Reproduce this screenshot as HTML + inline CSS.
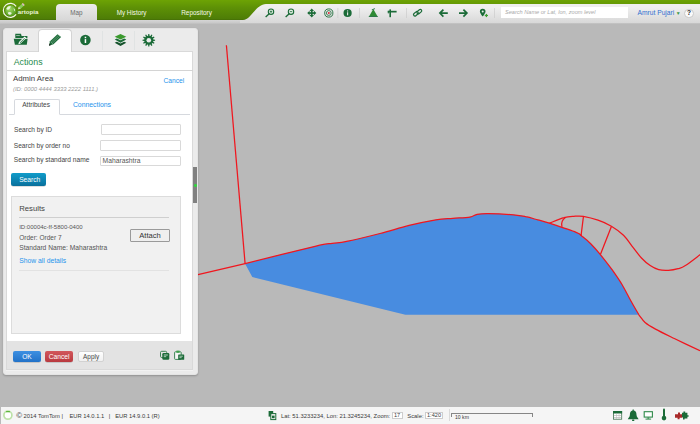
<!DOCTYPE html>
<html>
<head>
<meta charset="utf-8">
<title>Cartopia</title>
<style>
*{box-sizing:border-box;margin:0;padding:0}
html,body{width:700px;height:424px;overflow:hidden}
body{position:relative;background:#b9b9b9;font-family:"Liberation Sans",sans-serif;font-size:7px;color:#333}
.abs{position:absolute}
.t{position:absolute;white-space:nowrap;line-height:1}
#hdr{left:0;top:0;width:700px;height:20px;background:linear-gradient(#6da304,#5d9006 40%,#4e7d07 94%,#436c06)}
#hdrband{left:0;top:20px;width:700px;height:3.500px;background:linear-gradient(#d6d6d6,#c9c9c9 70%,#bcbcbc)}
#maptab{left:56px;top:4px;width:41px;height:17px;border-radius:4px 4px 0 0;background:linear-gradient(#ececec,#d6d6d6)}
.nav{color:#f4f8ea;font-size:6.300px;top:9.600px}
#panel{left:3px;top:28px;width:195.200px;height:346.500px;background:#ebebeb;border:1px solid #e4e4e4;border-radius:3px;box-shadow:0 1px 2px rgba(0,0,0,.22)}
#pinner{left:6px;top:50.700px;width:187.300px;height:319.800px;background:#e3e3e3;border:1px solid #d9d9d9;box-shadow:0 .7px 0 #f6f6f6}
#ptab{left:37.800px;top:28.800px;width:33.800px;height:23.200px;background:#fff;border-radius:4px 4px 0 0;border:1px solid #d4d4d4;border-bottom:none}
#pcontent{left:7px;top:51.500px;width:185.300px;height:289.500px;background:#fff}
.inp{position:absolute;background:#fff;border:1px solid #d9d9d9;height:10px;border-radius:1px}
.blue{color:#2794ec}
.btn{position:absolute;border-radius:2px;text-align:center;font-size:7px;line-height:11px;color:#fff}
#bot{left:1px;top:406.700px;width:699px;height:18px;background:#f5f5f5;box-shadow:inset 0 -1.100px 0 #d6d6d6}
.bt{font-size:5.800px;color:#3a3a3a;top:413.500px}
.box{position:absolute;background:#fff;border:1px solid #cdcdcd}
</style>
</head>
<body>

<!-- MAP -->
<svg class="abs" style="left:0;top:0" width="700" height="424" viewBox="0 0 700 424">
  <path d="M245.1,263.7 C256.8,260.8 300.6,249.7 315.1,246.3 C329.6,242.9 327.1,244.2 332.3,243.4 C337.6,242.6 338.7,243.1 346.6,241.4 C354.6,239.8 369.6,236.2 380.0,233.5 C390.4,230.8 399.8,227.7 409.1,225.4 C418.4,223.1 428.6,221.0 435.9,219.8 C443.2,218.6 447.2,218.8 452.9,218.3 C458.6,217.9 465.9,217.8 469.9,217.1 C473.9,216.4 474.1,215.0 477.1,214.4 C480.1,213.8 482.0,213.5 488.1,213.6 C494.2,213.7 507.3,214.3 513.6,214.8 C519.9,215.3 521.7,215.8 525.7,216.7 C529.7,217.5 533.8,218.8 537.8,219.9 C541.8,221.0 543.0,221.1 549.4,223.2 C555.8,225.3 570.6,230.1 576.1,232.3 C581.6,234.5 579.8,234.5 582.2,236.4 C584.6,238.3 587.7,240.7 590.7,243.7 C593.7,246.7 596.8,250.2 600.4,254.6 C604.0,259.1 609.0,265.3 612.6,270.4 C616.2,275.5 619.3,279.9 622.3,285.0 C625.3,290.1 628.0,295.8 630.8,300.8 C633.6,305.8 637.5,312.5 638.9,314.8 L405.4,314.8 L252.3,277.1 Z" fill="#488ce0"/>
  <g fill="none" stroke="#f0161e" stroke-width="1.250" stroke-linejoin="round">
    <path d="M226.4,45.2 L245.1,263.7"/>
    <path d="M198,274.7 L245.1,263.7 C256.8,260.8 300.6,249.7 315.1,246.3 C329.6,242.9 327.1,244.2 332.3,243.4 C337.6,242.6 338.7,243.1 346.6,241.4 C354.6,239.8 369.6,236.2 380.0,233.5 C390.4,230.8 399.8,227.7 409.1,225.4 C418.4,223.1 428.6,221.0 435.9,219.8 C443.2,218.6 447.2,218.8 452.9,218.3 C458.6,217.9 465.9,217.8 469.9,217.1 C473.9,216.4 474.1,215.0 477.1,214.4 C480.1,213.8 482.0,213.5 488.1,213.6 C494.2,213.7 507.3,214.3 513.6,214.8 C519.9,215.3 521.7,215.8 525.7,216.7 C529.7,217.5 533.8,218.8 537.8,219.9 C541.8,221.0 543.0,221.1 549.4,223.2 C555.8,225.3 570.6,230.1 576.1,232.3 C581.6,234.5 579.8,234.5 582.2,236.4 C584.6,238.3 587.7,240.7 590.7,243.7 C593.7,246.7 596.8,250.2 600.4,254.6 C604.0,259.1 609.0,265.3 612.6,270.4 C616.2,275.5 619.3,279.9 622.3,285.0 C625.3,290.1 628.0,295.8 630.8,300.8 C633.6,305.8 637.5,312.5 638.9,314.8 C639.1,315.1 639.4,315.5 640.4,316.8 C641.4,318.1 642.6,320.4 645.1,322.5 C647.6,324.6 650.6,326.4 655.5,329.1 C660.4,331.8 666.9,334.9 674.3,338.5 C681.7,342.1 695.7,348.8 700.0,350.8"/>
    <path d="M549.4,223.2 C551.8,222.3 560.0,218.8 564.0,217.7 C568.0,216.5 570.5,216.5 573.7,216.3 C576.9,216.1 579.4,215.7 583.4,216.3 C587.4,217.0 593.3,218.5 598.0,220.2 C602.7,221.8 607.1,223.7 611.4,226.2 C615.6,228.7 620.1,231.9 623.5,235.2 C626.9,238.5 629.0,242.2 632.0,246.1 C635.0,249.9 638.7,255.1 641.7,258.3 C644.7,261.6 647.4,263.7 650.2,265.6 C653.0,267.5 655.7,268.9 658.7,269.7 C661.7,270.5 665.2,270.6 668.4,270.4 C671.6,270.2 675.3,269.5 678.1,268.7 C680.9,267.9 681.6,268.1 685.4,265.6 C689.2,263.2 698.4,255.9 701.0,254.0"/>
    <path d="M565.4,217.600 Q560.5,221 562,226.800"/>
    <path d="M583.4,216.800 L581,236"/>
    <path d="M611.4,226.500 L600.4,254.600"/>
  </g>
</svg>

<!-- HEADER -->
<div id="hdr" class="abs"></div>
<div id="hdrband" class="abs"></div>
<svg class="abs" style="left:0;top:0" width="700" height="23" viewBox="0 0 700 23">
  <defs>
    <linearGradient id="tg" x1="0" y1="0" x2="0" y2="1"><stop offset="0.17" stop-color="#efefef"/><stop offset="1" stop-color="#d8d8d8"/></linearGradient>
  </defs>
  <path d="M240,23 L240,20 L243,20 C251,20 256,4 266,4 L700,4 L700,23 Z" fill="url(#tg)"/>
</svg>
<div id="maptab" class="abs"></div>

<!-- logo -->
<svg class="abs" style="left:0;top:0" width="44" height="20" viewBox="0 0 44 20">
  <defs>
    <radialGradient id="gl" cx=".4" cy=".35" r=".7"><stop offset="0" stop-color="#a6dc6a"/><stop offset="1" stop-color="#4f9a1c"/></radialGradient>
  </defs>
  <circle cx="10.600" cy="10.700" r="5.400" fill="url(#gl)"/>
  <path d="M6.400,8.400 Q7.600,5.800 10.800,6 Q10.600,8.400 8.800,9.600 Q6.800,10.200 6.400,8.400Z M7.800,12.600 Q10,11.400 11.800,13 Q11.200,15.200 9,14.800 Q7.800,14 7.800,12.600Z M13.600,7.800 Q15.400,9.400 15.200,11.800 Q13.600,11 13.600,7.800Z" fill="#f2f9e8" opacity=".92"/>
  <path d="M16.100,6.400 A7,7 0 1 0 16.100,14.400" fill="none" stroke="#f4f8ec" stroke-width="1.200"/>
  <path d="M18,9.200 L18.800,6.800 L22.800,3.100 L24.700,5 L20.600,8.700Z" fill="#86cc58"/>
  <path d="M22.800,3.100 L24.700,5 L23.700,5.900 L21.800,4Z" fill="#e6b4c6"/>
  <path d="M18,9.200 L18.800,6.800 L20.600,8.700Z" fill="#e4dcc4"/>
</svg>
<div class="t" style="left:17.800px;top:9.300px;font-size:6.200px;font-weight:bold;color:#eaf3dc">artopia</div>

<div class="t" style="left:70.200px;top:9.600px;font-size:6.300px;color:#6a6a6a">Map</div>
<div class="t nav" style="left:116.700px">My History</div>
<div class="t nav" style="left:181.200px;font-size:6.450px">Repository</div>

<!-- toolbar icons -->
<svg class="abs" style="left:260px;top:4px" width="240" height="18" viewBox="260 4 240 18" fill="#1b6b38" stroke="none">
  <!-- zoom in -->
  <g>
    <circle cx="271" cy="11.7" r="2.7" fill="#e4efe6" stroke="#1b6b38" stroke-width="1.1"/>
    <path d="M269,13 L265.200,16.4 L266.100,17.400 L269.900,14Z"/>
    <rect x="269.800" y="11.3" width="2.4" height=".8"/><rect x="270.600" y="10.5" width=".8" height="2.4"/>
  </g>
  <!-- zoom out -->
  <g>
    <circle cx="291" cy="11.7" r="2.7" fill="#e4efe6" stroke="#1b6b38" stroke-width="1.1"/>
    <path d="M289,13 L285.200,16.4 L286.100,17.400 L289.900,14Z"/>
    <rect x="289.800" y="11.3" width="2.4" height=".8"/>
  </g>
  <!-- pan -->
  <g>
    <rect x="310.900" y="10" width="1.700" height="6"/><rect x="308.700" y="12.2" width="6" height="1.700"/>
    <path d="M311.750,8.600 L314,11 L309.500,11Z M311.750,17.500 L314,15.100 L309.500,15.100Z M307.200,13.050 L309.600,10.800 L309.600,15.300Z M316.300,13.050 L313.900,10.800 L313.900,15.300Z"/>
  </g>
  <!-- target -->
  <g fill="none" stroke="#1b6b38">
    <circle cx="328.800" cy="13" r="4.100" stroke-width=".9"/>
    <circle cx="328.800" cy="13" r="2.400" stroke-width=".8"/>
    <circle cx="328.800" cy="13" r="1" fill="#d23" stroke="none"/>
  </g>
  <rect x="337.600" y="8" width=".6" height="10" fill="#c8c8c8"/>
  <!-- info -->
  <g>
    <circle cx="347.600" cy="13" r="4.100"/>
    <rect x="347.050" y="12.300" width="1.100" height="3" fill="#e8e8e8"/><rect x="347.050" y="10.400" width="1.100" height="1.100" fill="#e8e8e8"/>
  </g>
  <rect x="359.200" y="8" width=".6" height="10" fill="#c8c8c8"/>
  <!-- cone -->
  <g>
    <path d="M373.300,9 L377.300,16 L369.300,16Z" fill="#2f8a35"/>
    <rect x="368.800" y="16" width="9" height=".9" />
    <path d="M371.800,9.800 L375,8.600" stroke="#1b6b38" stroke-width=".8"/>
  </g>
  <!-- signpost -->
  <g>
    <rect x="389.400" y="9.400" width="1.600" height="7.800"/>
    <rect x="387.800" y="10.800" width="8.800" height="1.700"/>
    <rect x="387.800" y="10.800" width="1" height="2.600"/>
  </g>
  <rect x="406.200" y="8" width=".6" height="10" fill="#c8c8c8"/>
  <!-- link -->
  <g fill="none" stroke="#1b6b38" stroke-width="1.200">
    <rect x="413.200" y="12.300" width="5.400" height="2.800" rx="1.400" transform="rotate(-40 416 13.700)"/>
    <rect x="416.600" y="10.200" width="5.400" height="2.800" rx="1.400" transform="rotate(-40 419.300 11.600)"/>
  </g>
  <!-- arrows -->
  <g fill="none" stroke="#1b6b38" stroke-width="1.700">
    <path d="M447.800,13.100 L440,13.100 M443.400,9.600 L439.900,13.100 L443.400,16.600"/>
    <path d="M459,13.100 L466.800,13.100 M463.400,9.600 L466.900,13.100 L463.400,16.600"/>
  </g>
  <!-- pin -->
  <g>
    <path d="M482.700,8.800 a2.800,2.800 0 0 1 2.800,2.800 c0,1.800 -2.800,5 -2.800,5 c0,0 -2.800,-3.200 -2.800,-5 a2.800,2.800 0 0 1 2.800,-2.800Z"/>
    <circle cx="482.700" cy="11.500" r="1" fill="#eee"/>
    <rect x="484.800" y="14.900" width="3.200" height="1.200" fill="#3ca033"/><rect x="485.800" y="13.900" width="1.200" height="3.200" fill="#3ca033"/>
  </g>
  <rect x="494.200" y="8" width=".6" height="10" fill="#c8c8c8"/>
</svg>

<div class="abs" style="left:501px;top:7.4px;width:126.600px;height:10.200px;background:#fff"></div>
<div class="t" style="left:505px;top:10.3px;font-size:5.6px;font-style:italic;color:#aaa">Search Name or Lat, lon, zoom level</div>
<div class="t" style="left:637.5px;top:10px;font-size:6.700px;color:#2f6fd0">Amrut Pujari</div>
<div class="t" style="left:675.800px;top:11px;font-size:5px;color:#3c9a4a">&#9660;</div>
<div class="abs" style="left:684px;top:8.5px;width:9.5px;height:9.5px;border-radius:5px;background:#fafafa;border:1px solid #c8c8c8"></div>
<div class="t" style="left:687px;top:10.2px;font-size:6.5px;font-weight:bold;color:#222">?</div>

<!-- PANEL -->
<div id="panel" class="abs"></div>
<div id="pinner" class="abs"></div>
<div id="pcontent" class="abs"></div>
<div id="ptab" class="abs"></div>
<div class="abs" style="left:101.700px;top:31px;width:1px;height:18.500px;background:#e0e3e3"></div>
<div class="abs" style="left:134.200px;top:31px;width:1px;height:18.500px;background:#e0e3e3"></div>

<svg class="abs" style="left:8px;top:30px" width="160" height="22" viewBox="8 30 160 22" fill="#1b6b38">
  <!-- folder edit -->
  <g>
    <path d="M15.300,33.800 L21,33.800 L21.600,36 L27.400,36 L27.400,38 L15.300,38Z"/>
    <rect x="16.200" y="35.200" width="3.600" height=".6" fill="#e6e6e6"/>
    <path d="M13.800,38.700 L27.600,38.700 L26.800,44.800 L14.900,44.800Z"/>
    <path d="M18.300,44.300 L19,42 L24.600,36.400 L26.300,38 L20.600,43.600Z" fill="#fff"/>
    <path d="M19.700,42.800 L24.500,38 L24.900,38.400 L20.100,43.200Z" fill="#1b6b38"/>
  </g>
  <!-- pencil -->
  <g>
    <path d="M57.500,34.200 L61.100,37 L53.400,44.300 L49,45.800 L50,41.300Z"/>
    <path d="M49,45.800 L49.500,43.600 L51,45.100Z" fill="#222"/>
    <g stroke="#cfe3d4" stroke-width=".35" fill="none">
      <path d="M51.200,42.200 L58.600,35.200 M52.300,43.200 L59.800,36.100"/>
      <path d="M50.400,41.600 L53.100,44"/>
    </g>
  </g>
  <!-- info -->
  <g>
    <circle cx="85.400" cy="40" r="5.300"/>
    <rect x="84.700" y="39.100" width="1.500" height="3.900" fill="#fff"/><rect x="84.700" y="36.700" width="1.500" height="1.500" fill="#fff"/>
  </g>
  <!-- layers -->
  <g>
    <path d="M120.500,33.900 L126.300,36.700 L120.500,39.500 L114.700,36.700Z" fill="#3b9a2e"/>
    <path d="M114.700,39.500 L116.900,38.400 L120.500,40.200 L124.100,38.400 L126.300,39.500 L120.500,42.700Z" fill="#1b6b38"/>
    <path d="M114.700,42.800 L116.900,41.700 L120.500,43.500 L124.100,41.700 L126.300,42.800 L120.500,46Z" fill="#14522b"/>
  </g>
  <!-- gear -->
  <g>
    <path d="M148.08,35.66 L148.24,33.92 L149.36,33.92 L149.52,35.66 L150.45,35.91 L151.45,34.49 L152.42,35.05 L151.69,36.63 L152.37,37.31 L153.95,36.58 L154.51,37.55 L153.09,38.55 L153.34,39.48 L155.08,39.64 L155.08,40.76 L153.34,40.92 L153.09,41.85 L154.51,42.85 L153.95,43.82 L152.37,43.09 L151.69,43.77 L152.42,45.35 L151.45,45.91 L150.45,44.49 L149.52,44.74 L149.36,46.48 L148.24,46.48 L148.08,44.74 L147.15,44.49 L146.15,45.91 L145.18,45.35 L145.91,43.77 L145.23,43.09 L143.65,43.82 L143.09,42.85 L144.51,41.85 L144.26,40.92 L142.52,40.76 L142.52,39.64 L144.26,39.48 L144.51,38.55 L143.09,37.55 L143.65,36.58 L145.23,37.31 L145.91,36.63 L145.18,35.05 L146.15,34.49 L147.15,35.91Z" />
    <circle cx="148.800" cy="40.200" r="2.300" fill="#ebebeb"/>
  </g>
</svg>

<div class="t" style="left:13.700px;top:57.600px;font-size:8.800px;color:#1f8a4c">Actions</div>
<div class="abs" style="left:7px;top:69.800px;width:185.500px;height:1px;background:#d4d4d4"></div>
<div class="t" style="left:13px;top:74.700px;font-size:7.800px;color:#3c3c3c">Admin Area</div>
<div class="t" style="left:13px;top:87.200px;font-size:5.870px;font-style:italic;color:#9a9a9a">(ID: 0000 4444 3333 2222 1111.)</div>
<div class="t blue" style="left:163.500px;top:77.800px;font-size:6.700px">Cancel</div>

<!-- inner tabs -->
<div class="abs" style="left:9px;top:114px;width:180.500px;height:1px;background:#d6d9de"></div>
<div class="abs" style="left:13.500px;top:99px;width:46.500px;height:16px;background:#fff;border:1px solid #d6d9de;border-bottom:1px solid #fff;border-radius:2px 2px 0 0"></div>
<div class="t" style="left:22.200px;top:102px;font-size:6.600px;color:#444">Attributes</div>
<div class="t blue" style="left:72.900px;top:101.900px;font-size:6.870px">Connections</div>

<!-- form -->
<div class="t" style="left:14px;top:126.700px;font-size:6.600px;color:#444">Search by ID</div>
<div class="inp" style="left:101px;top:124.200px;width:80px;height:10.600px"></div>
<div class="t" style="left:13.800px;top:142.500px;font-size:6.600px;color:#444">Search by order no</div>
<div class="inp" style="left:100px;top:140px;width:81px;height:10.500px"></div>
<div class="t" style="left:13.800px;top:157.300px;font-size:6.600px;color:#444">Search by standard name</div>
<div class="inp" style="left:100px;top:156px;width:81px"></div>
<div class="t" style="left:102.600px;top:158.400px;font-size:6.740px;color:#555">Maharashtra</div>

<div class="btn" style="left:11px;top:173px;width:35.300px;height:13px;line-height:14.300px;text-indent:2.200px;font-size:6.700px;background:linear-gradient(#109cca,#0b79a6 80%,#0a6f9a);box-shadow:0 .5px .5px rgba(0,0,0,.25)">Search</div>

<!-- scrollbar -->
<div class="abs" style="left:193.100px;top:166.500px;width:4.300px;height:36.400px;background:#808080"></div>
<div class="abs" style="left:194.400px;top:184.300px;width:2.400px;height:2.400px;border-radius:1.200px;background:#34d440"></div>

<!-- results -->
<div class="abs" style="left:11px;top:196px;width:170px;height:138px;background:#f1f1f1;border:1px solid #dcdcdc"></div>
<div class="t" style="left:19.200px;top:205.200px;font-size:7.740px;color:#444">Results</div>
<div class="abs" style="left:19px;top:217px;width:150px;height:1px;background:#cfcfcf"></div>
<div class="t" style="left:19.200px;top:224.300px;font-size:6.020px;color:#555">ID:00004c-ff-5800-0400</div>
<div class="t" style="left:19.200px;top:234.800px;font-size:6.520px;color:#555">Order: Order 7</div>
<div class="t" style="left:19.200px;top:244.600px;font-size:6.700px;color:#555">Standard Name: Maharashtra</div>
<div class="t blue" style="left:19.200px;top:257.800px;font-size:6.770px">Show all details</div>
<div class="abs" style="left:19px;top:270px;width:150px;height:1px;background:#e2e2e2"></div>
<div class="btn" style="left:130px;top:229px;width:40px;height:13px;line-height:11px;font-size:7.6px;color:#333;background:#efefef;border:1px solid #9a9a9a;border-radius:1px">Attach</div>

<!-- footer buttons -->
<div class="btn" style="left:13.200px;top:350.600px;width:27.500px;height:11.500px;line-height:12.400px;font-size:6.600px;background:linear-gradient(#3d90e2,#2272c8);box-shadow:0 .5px .5px rgba(0,0,0,.25)">OK</div>
<div class="btn" style="left:45px;top:350.600px;width:28.300px;height:11.500px;line-height:12.200px;font-size:6.700px;background:linear-gradient(#d2565b,#b93a3f);box-shadow:0 .5px .5px rgba(0,0,0,.25)">Cancel</div>
<div class="btn" style="left:77.500px;top:350.600px;width:26.200px;height:11.500px;line-height:10.600px;font-size:6.400px;text-indent:1px;background:linear-gradient(#fff,#f0f0f0);border:1px solid #d2d2d2;color:#444">Apply</div>
<svg class="abs" style="left:158px;top:349px" width="30" height="14" viewBox="158 349 30 14" fill="#1b6b38">
  <g>
    <rect x="160.500" y="351.300" width="6.200" height="6.200" rx="1.200" fill="#e3e3e3" stroke="#2a7a45" stroke-width=".9"/>
    <rect x="162.300" y="353" width="7" height="6.800" rx="1.200" fill="#1b6b38"/>
    <rect x="163.800" y="354.600" width="4" height=".8" fill="#dfeee3"/>
    <rect x="163.800" y="356.400" width="2.400" height=".7" fill="#dfeee3"/>
  </g>
  <g>
    <rect x="174.600" y="351.800" width="6.600" height="7.600" rx=".8" fill="#f4f4f4" stroke="#2a7a45" stroke-width=".9"/>
    <rect x="176.400" y="350.600" width="3.200" height="2.200" fill="#3ca04a"/>
    <rect x="178.200" y="354.400" width="6" height="5.400" rx=".6" fill="#1b6b38"/>
    <rect x="179.400" y="355.800" width="3.400" height=".7" fill="#dfeee3"/>
    <rect x="179.400" y="357.400" width="2.200" height=".7" fill="#dfeee3"/>
  </g>
</svg>

<!-- BOTTOM BAR -->
<div id="bot" class="abs"></div>
<svg class="abs" style="left:0;top:407px" width="16" height="17" viewBox="0 407 16 17">
  <circle cx="7.900" cy="415.200" r="4" fill="#fff" stroke="#bde2a8" stroke-width="1.700"/>
  <rect x="6" y="410.900" width="4" height="1.300" rx=".5" fill="#5cb63c"/>
</svg>
<div class="t" style="left:16.200px;top:412.400px;font-size:8px;color:#333">&copy;</div>
<div class="t bt" style="left:23.600px">2014 TomTom |</div>
<div class="t bt" style="left:69.400px">EUR 14.0.1.1</div>
<div class="t bt" style="left:108.700px">|</div>
<div class="t bt" style="left:115.200px">EUR 14.9.0.1 (R)</div>

<svg class="abs" style="left:266.300px;top:409.200px" width="12" height="14" viewBox="266 408 12 14">
  <rect x="268.6" y="410" width="4.6" height="5.6" fill="#1b6b38"/>
  <rect x="270.8" y="412.6" width="5" height="6" fill="#f3f3f3" stroke="#1b6b38" stroke-width="1"/>
  <rect x="272" y="414.6" width="2.6" height="2.6" fill="#1b6b38"/>
</svg>
<div class="t" style="left:281px;top:413.500px;font-size:5.850px;color:#3a3a3a">Lat: 51.3233234, Lon: 21.3245234, Zoom:</div>
<div class="box" style="left:391.700px;top:411.700px;width:11px;height:7.300px"></div>
<div class="t" style="left:394px;top:412.900px;font-size:5.600px;color:#3a3a3a">17</div>
<div class="t" style="left:407.300px;top:413.500px;font-size:5.850px;color:#3a3a3a">Scale:</div>
<div class="box" style="left:424.500px;top:411.700px;width:18.600px;height:7.300px"></div>
<div class="t" style="left:427px;top:412.900px;font-size:5.600px;color:#3a3a3a">1:420</div>
<div class="abs" style="left:449px;top:409px;width:.7px;height:12px;background:#dadada"></div>
<div class="abs" style="left:451.300px;top:412.700px;width:81.600px;height:4px;border:1px solid #868686;border-bottom:none"></div>
<div class="t" style="left:455px;top:414.600px;font-size:5.100px;color:#3a3a3a">10 km</div>

<svg class="abs" style="left:610px;top:407px" width="90" height="17" viewBox="610 407 90 17">
  <!-- calendar/window -->
  <g>
    <rect x="613.500" y="411.400" width="8.200" height="7.800" fill="#fff" stroke="#3c6e4c" stroke-width=".8"/>
    <rect x="613.100" y="411" width="9" height="2.500" fill="#1b6b38"/>
    <rect x="614" y="415.200" width="7.400" height=".5" fill="#9a9a9a"/>
    <rect x="614" y="417.100" width="7.400" height=".5" fill="#9a9a9a"/>
    <rect x="616.300" y="413.500" width=".5" height="5.500" fill="#b5b5b5"/>
    <rect x="618.800" y="413.500" width=".5" height="5.500" fill="#b5b5b5"/>
  </g>
  <!-- bell -->
  <g fill="#1b6b38">
    <path d="M633.200,410.400 c2.700,0 3.300,2.300 3.300,4.300 c0,2.200 1.600,3.200 2.100,4.500 L627.800,419.200 c.5,-1.300 2.100,-2.300 2.100,-4.500 c0,-2 .6,-4.300 3.300,-4.300Z"/>
    <rect x="632" y="419.400" width="2.400" height="1.500" rx=".6"/>
    <rect x="632.600" y="409.500" width="1.200" height="1.400"/>
  </g>
  <!-- monitor -->
  <g>
    <rect x="644.200" y="411.700" width="8.200" height="5.400" fill="#fff" stroke="#2f8a4a" stroke-width="1.100"/>
    <rect x="647.400" y="417.400" width="1.800" height="1.300" fill="#2f8a4a"/>
    <rect x="645.500" y="418.600" width="5.600" height="1" fill="#2f8a4a"/>
  </g>
  <!-- thermometer -->
  <g fill="#1b6b38">
    <rect x="663" y="408.400" width="2" height="9" rx="1"/>
    <circle cx="664" cy="418.100" r="2.300"/>
  </g>
  <!-- puzzle -->
  <g transform="translate(-1,1.200)">
    <path d="M676,413 L679,413 L679,411.400 L681,411.400 L681,413 L683.400,413 L683.400,416.600 L680.600,416.600 L680.600,418 L678.600,418 L678.600,416.600 L676,416.600Z" fill="#a82a2a"/>
    <path d="M683,411.600 L684.400,411.600 L684.400,410.200 L686.200,410.200 L686.200,411.600 L688.400,411.600 L688.400,414 L689.600,414 L689.600,415.600 L688.400,415.600 L688.400,417.400 L685.600,417.400 L685.600,418.400 L684,418.400 L684,416 L683,416Z" fill="#1b6b38"/>
  </g>
</svg>

</body>
</html>
